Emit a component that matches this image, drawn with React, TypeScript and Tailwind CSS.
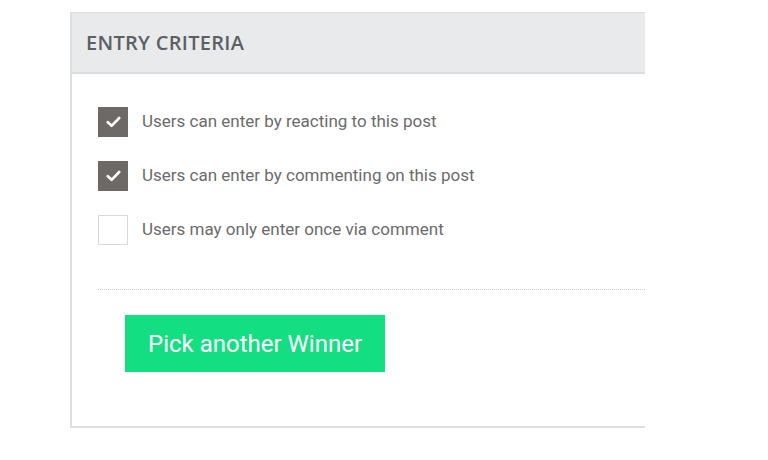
const options = [
  { label: "Users can enter by reacting to this post", checked: true },
  { label: "Users can enter by commenting on this post", checked: true },
  { label: "Users may only enter once via comment", checked: false },
];

function Check() {
  return (
    <svg width="15" height="12" viewBox="0 0 15 12" fill="none">
      <path
        d="M1.8 6.2 L5.6 9.8 L13.2 2"
        stroke="white"
        strokeWidth="2.6"
        strokeLinecap="round"
        strokeLinejoin="round"
      />
    </svg>
  );
}

export default function App() {
  return (
    <div className="h-[460px] w-[768px] bg-white pt-[12px] pl-[70px] font-['Roboto',sans-serif]">
      <div className="flex h-[416px] w-[575px] flex-col border-t border-b-2 border-l-2 border-[#dedede]">
        <div className="flex h-[61px] items-center border-b-2 border-[#dcdddf] bg-[#e9eaeb] pl-[14px]">
          <span className="font-['Open_Sans',sans-serif] text-[20px] font-semibold tracking-[0.3px] text-[#5c5f63]">
            ENTRY CRITERIA
          </span>
        </div>

        <div className="flex flex-col pl-[26px] pt-[33px]">
          <div className="flex flex-col gap-[24px]">
            {options.map((o) => (
              <div key={o.label} className="flex items-center gap-[14px]">
                {o.checked ? (
                  <div className="flex h-[30px] w-[30px] items-center justify-center bg-[#6c6966]">
                    <Check />
                  </div>
                ) : (
                  <div className="h-[30px] w-[30px] border border-[#dcd9d4] bg-white" />
                )}
                <span className="text-[17px] text-[#6b6b6b]">{o.label}</span>
              </div>
            ))}
          </div>

          <div className="mt-[44px] border-t border-dotted border-[#cfcfcf]" />

          <div className="pl-[27px] pt-[25px]">
            <button
              type="button"
              className="flex h-[57px] w-[260px] items-center justify-center bg-[#13df82] text-[24px] text-white"
            >
              Pick another Winner
            </button>
          </div>
        </div>
      </div>
    </div>
  );
}
